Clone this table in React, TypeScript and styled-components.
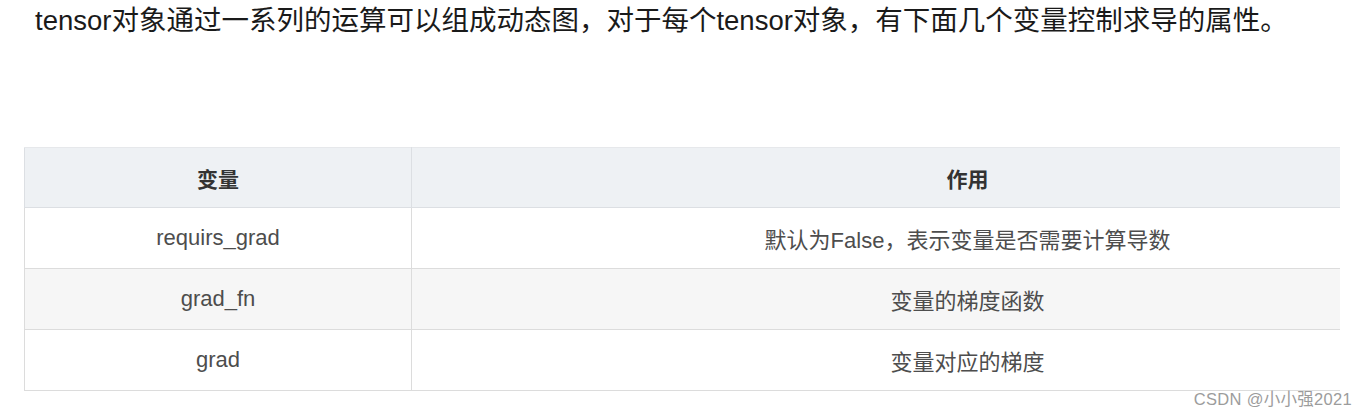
import styled, { createGlobalStyle } from 'styled-components';

const GlobalStyle = createGlobalStyle`
  html, body {
    margin: 0;
    padding: 0;
    background: #ffffff;
  }
  body {
    font-family: "Liberation Sans", "Noto Sans CJK SC", sans-serif;
  }
`;

const Page = styled.div`
  position: relative;
  width: 1368px;
  height: 416px;
  overflow: hidden;
  background: #fff;
`;

const Intro = styled.p`
  margin: 0;
  padding: 2px 0 0 35px;
  font-size: 27.5px;
  line-height: 38px;
  color: #1a1a1a;
  white-space: nowrap;
`;

const TableClip = styled.div`
  margin: 107px 0 0 24px;
  width: 1316px;
  overflow: hidden;
`;

const Table = styled.table`
  width: 1500px;
  border-collapse: collapse;
  table-layout: fixed;
`;

const Row = styled.tr<{ $striped?: boolean }>`
  height: 61px;
  background: ${(p) => (p.$striped ? '#f6f6f6' : '#ffffff')};
`;

const HeadRow = styled.tr`
  height: 60px;
  background: #eef1f4;
`;

const HeadCell = styled.th<{ $width?: number }>`
  width: ${(p) => (p.$width ? `${p.$width}px` : 'auto')};
  border: 1px solid #dcdfe3;
  border-top-color: #e6e8eb;
  font-size: 21px;
  font-weight: 700;
  color: #333;
  text-align: center;
  padding: 0;
`;

const Cell = styled.td`
  border: 1px solid #dcdcdc;
  font-size: 22px;
  color: #4d4d4d;
  text-align: center;
  padding: 0;
`;

const Watermark = styled.div`
  position: absolute;
  right: 16px;
  bottom: 6px;
  font-size: 16.5px;
  color: #9c9c9c;
  letter-spacing: 0.3px;
`;

const rows = [
  { name: 'requirs_grad', desc: '默认为False，表示变量是否需要计算导数' },
  { name: 'grad_fn', desc: '变量的梯度函数' },
  { name: 'grad', desc: '变量对应的梯度' },
];

export default function App() {
  return (
    <Page>
      <GlobalStyle />
      <Intro>tensor对象通过一系列的运算可以组成动态图，对于每个tensor对象，有下面几个变量控制求导的属性。</Intro>

      <TableClip>
        <Table>
          <thead>
            <HeadRow>
              <HeadCell $width={386}>变量</HeadCell>
              <HeadCell>作用</HeadCell>
            </HeadRow>
          </thead>
          <tbody>
            {rows.map((r, i) => (
              <Row key={r.name} $striped={i === 1}>
                <Cell>{r.name}</Cell>
                <Cell>{r.desc}</Cell>
              </Row>
            ))}
          </tbody>
        </Table>
      </TableClip>

      <Watermark>CSDN @小小强2021</Watermark>
    </Page>
  );
}
